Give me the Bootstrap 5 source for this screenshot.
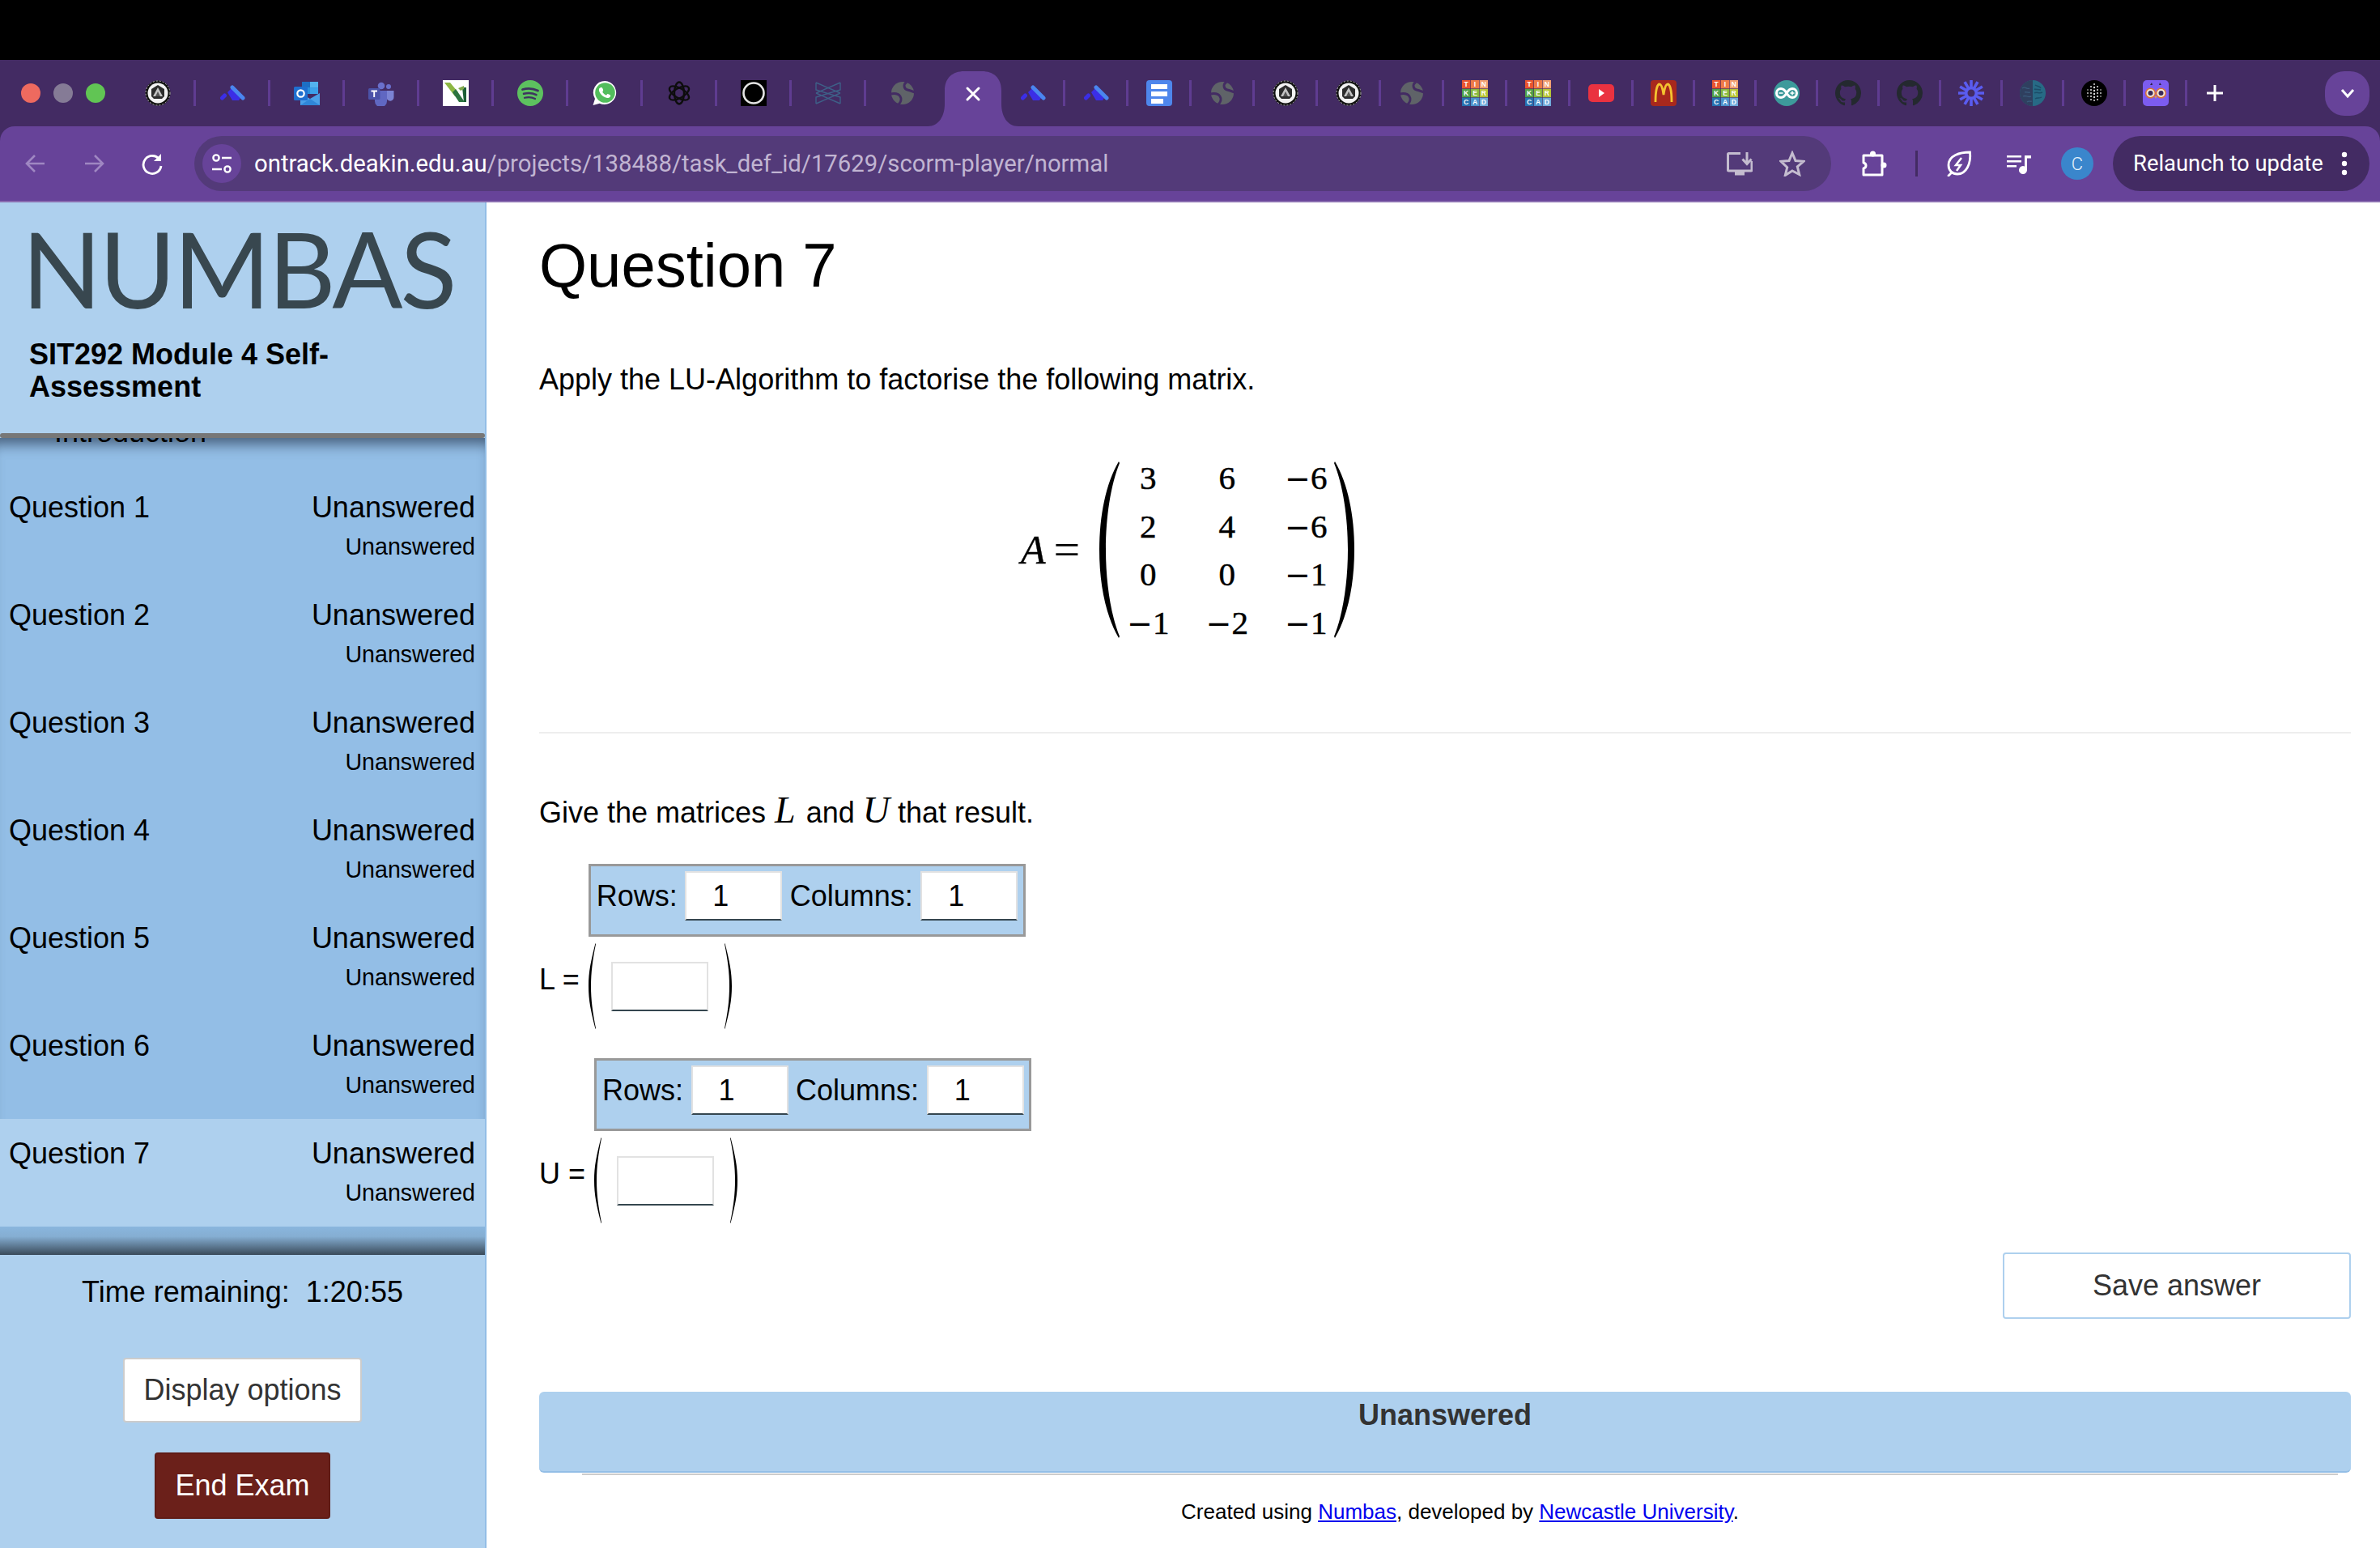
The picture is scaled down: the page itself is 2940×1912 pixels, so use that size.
<!DOCTYPE html>
<html lang="en">
<head>
    <meta charset="UTF-8">
    <title>Numbas - SIT292 Module 4 Self-Assessment</title>
    <link href="https://cdn.jsdelivr.net/npm/bootstrap@5.3.0/dist/css/bootstrap.min.css" rel="stylesheet">
    <style>
        html, body { width: 2940px; height: 1912px; overflow: hidden; }
        body { font-family: "Liberation Sans", Arial, sans-serif; font-size: 36px; color: #000; background: #000; }

        /* browser chrome */
        .blackbar { height: 74px; background: #000; }
        .tabstrip { height: 82px; background: #432b63; }
        .lights { width: 150px; padding-left: 26px; gap: 16px; flex: none; }
        .lights span { width: 24px; height: 24px; border-radius: 50%; }
        .tabcell { height: 32px; border-right: 3px solid #5f3c91; flex: none; }
        .tabcell.wide { width: 92px; }
        .tabcell.slim { width: 78px; }
        .tabcell.slimmer { width: 76px; }
        .tabcell.nosep { border-right-color: transparent; }
        .fav { width: 32px; height: 32px; display: block; }
        .acttab { width: 112px; height: 68px; flex: none; margin: 0 -20px 0 -16px; }
        .tabplus { width: 24px; height: 24px; margin-left: 22px; flex: none; }
        .tabmenu { width: 55px; height: 55px; border-radius: 24px; background: #674399; margin-right: 13px; flex: none; }
        .toolbar { height: 94px; background: #674399; border-top-left-radius: 18px; border-top-right-radius: 18px; border-bottom: 2px solid #8a6db0; padding-left: 8px; padding-right: 13px; }
        .toolwrap { background: #432b63; }
        .slot { width: 72px; flex: none; }
        .slot.afteromni { margin-left: 17px; }
        .slot.nudge { margin-left: 1px; }
        .omni { height: 68px; background: #533a79; border-radius: 34px; margin-left: 16px; padding: 0 32px 0 10px; font-family: Roboto, sans-serif; font-size: 29.3px; min-width: 0; }
        .sitechip { width: 48px; height: 48px; border-radius: 50%; background: #674399; margin-right: 16px; flex: none; }
        .urltext { padding-top: 2px; }
        .urlhost { color: #fff; }
        .urlpath { color: #c1b5d2; }
        .starmark { margin-left: 33px; flex: none; }
        .toolsep { width: 3px; height: 32px; background: #432b63; margin: 0 16px 0 15px; flex: none; }
        .avatar { width: 40px; height: 40px; border-radius: 50%; background: #3a86cc; color: #e6f2fc; font-family: Roboto, sans-serif; font-size: 22px; font-weight: 300; }
        .relaunch { width: 317px; height: 68px; border-radius: 34px; background: #432b63; color: #fff; font-family: Roboto, sans-serif; font-size: 27.4px; margin-left: 8px; padding: 0 27px 0 25px; flex: none; }

        /* exam page */
        .examwrap { height: 1662px; background: #fff; }
        .sidebar { width: 601px; flex: none; background: #aed0ee; border-right: 2px solid #93bee6; }
        .sidehead { height: 285px; padding: 16px 0 0 36px; }
        .logoword { font-family: Lato, sans-serif; font-size: 129px; line-height: 130px; color: #38474f; letter-spacing: -3px; margin-left: -9px; }
        .examname { font-weight: 700; font-size: 36px; line-height: 40px; margin-top: 22px; width: 420px; }
        .sidebreak { height: 6px; background: #777; border-radius: 3px; flex: none; }
        .qlist { height: 1009px; background: #93bee6; overflow: hidden; flex: none; box-shadow: inset 0 20px 16px -12px rgba(50, 70, 95, .75), inset -8px 0 12px -8px rgba(60, 90, 130, .15); }
        .introrow { height: 43px; overflow: hidden; padding-left: 67px; }
        .introrow div { line-height: 42px; margin-top: -28px; }
        .qrow { height: 133px; padding: 19px 12px 0 11px; }
        .qrow.now { background: #aed0ee; }
        .qtop { line-height: 48px; }
        .qsub { font-size: 28.6px; line-height: 40px; margin-top: 4px; text-align: right; }
        .listfoot { height: 35px; background: linear-gradient(#8ab6de, #85aed2 35%, #3a4a5a); }
        .sidefoot { padding-top: 26px; }
        .timeleft { line-height: 40px; }
        .btn.sidebtn { font-size: 36px; line-height: 1; border-radius: 4px; padding: 0; display: flex; align-items: center; justify-content: center; }
        .btn.btn-display { width: 295px; height: 80px; background: #fff; border: 2px solid #ccc; color: #333; margin-top: 61px; }
        .btn.btn-end { width: 217px; height: 82px; background: #6b201a; border: 2px solid #5f1c17; color: #fff; margin-top: 37px; }

        .mainpane { padding: 0 36px 0 65px; min-width: 0; }
        .qtitle { font-size: 76px; font-weight: 400; line-height: 84px; margin: 36px 0 0; }
        .qtext { line-height: 48px; margin: 75px 0 0; }
        .mathblock { margin: 66px 0 0 595px; }
        .mvar { font-family: "Liberation Serif", serif; font-style: italic; font-size: 46px; line-height: 1; }
        .mvar.leadl { margin: 0 3px 0 1px; }
        .mvar.biga { font-size: 50px; -webkit-text-stroke: .4px #000; }
        .mateq { font-family: "Liberation Serif", serif; font-size: 58px; line-height: 1; margin: 0 24px 0 10px; }
        .bigparen { width: 25px; height: 220px; flex: none; }
        .flipx { transform: scaleX(-1); }
        .matgrid { display: grid; grid-template-columns: 70px 125px 70px; grid-auto-rows: 59.5px; align-items: center; text-align: center; font-family: "Liberation Serif", serif; font-size: 41px; line-height: 1; -webkit-text-stroke: .5px #000; padding-top: 2px; }
        .mminus { font-family: "DejaVu Sans", sans-serif; font-size: 38px; -webkit-text-stroke: 0; }
        .rulegrey { height: 2px; background: #eee; margin: 105px 0 0; }
        .givetext { line-height: 48px; margin: 72px 0 0; }
        .answergrid { display: grid; grid-template-columns: auto auto; justify-content: start; margin-top: 39px; }
        .answergrid.nextgrid { margin-top: 36px; }
        .mlabel { padding-right: 11px; align-self: center; margin-bottom: 8px; white-space: nowrap; }
        .dimbox { width: 540px; height: 90px; background: #aed0ee; border: 3px solid #999; padding: 6px 6px 0 7px; gap: 9.5px; }
        .dimbox span { line-height: 61px; }
        .form-control.dimcell { width: 120px; height: 61px; flex: none; border: 2px solid #e2e2e2; border-bottom-color: #35464f; border-radius: 0; font-size: 36px; color: #000; padding: 0 0 0 32px; background: #fff; }
        .form-control.entrycell { padding: 0; margin: 0 20px 0 19px; }
        .smallparen { width: 9px; height: 106px; flex: none; }
        .matrixline { height: 106px; margin-top: 8px; }
        .savewrap { margin-top: 36px; }
        .btn.savebtn { width: 430px; height: 82px; background: #fff; border: 2px solid #aed0ee; border-radius: 4px; color: #333; font-size: 36px; }
        .statusbanner { height: 100px; background: #aed0ee; border-bottom: 2px solid #93bee6; border-radius: 6px; margin-top: 90px; padding-top: 5px; color: #333; font-weight: 700; font-size: 36px; line-height: 48px; text-align: center; }
        .creditline { margin: 1px 16px 0 53px; border-top: 2px solid #ccc; padding-top: 27px; font-size: 26px; line-height: 36px; text-align: center; }
        .creditline a { color: #00e; }
    </style>
</head>
<body>
    <!-- icon sheet -->
    <svg width="0" height="0" class="d-block" aria-hidden="true">
        <defs>
            <symbol id="i-crest" viewBox="0 0 32 32"><circle cx="16" cy="16" r="15.500" fill="#111"/><circle cx="16" cy="16" r="15" fill="none" stroke="#bbb" stroke-width="1" stroke-dasharray="2 2"/><circle cx="16" cy="16" r="12.500" fill="#f2f2f2"/><path d="M16 6l8 5v9l-3 3H11l-3-3v-9z" fill="#2c2c2c"/><path d="M16 9l6 11H10z" fill="#c4c4c4"/><path d="M16 14l3 6h-6z" fill="#555"/></symbol>
            <symbol id="i-atl" viewBox="0 0 32 32"><path d="M10 15l5-5 11 12-2 3h-8z" fill="#3b2ee6"/><path d="M16 9l13 13" stroke="#4a86f0" stroke-width="5" stroke-linecap="round" fill="none"/><path d="M3.500 22l3-3" stroke="#3b2ee6" stroke-width="5" stroke-linecap="round" fill="none"/></symbol>
            <symbol id="i-outlook" viewBox="0 0 32 32"><rect x="10" y="2" width="20" height="15" fill="#1d6fc4"/><rect x="20" y="2" width="10" height="7.500" fill="#53b2ee"/><rect x="10" y="9" width="10" height="8" fill="#2a8fdc"/><rect x="20" y="9.500" width="10" height="7.500" fill="#3ba1ea"/><path d="M8 16l12 7 12-7v15H8z" fill="#4ba0e8"/><path d="M8 31l12-8 12 8z" fill="#2f86d8"/><rect y="8" width="17" height="17" rx="1.500" fill="#1f6fd0"/><circle cx="8.500" cy="16.500" r="4.200" fill="none" stroke="#fff" stroke-width="2.200"/></symbol>
            <symbol id="i-teams" viewBox="0 0 32 32"><circle cx="16" cy="7" r="4.300" fill="#6a70cc"/><circle cx="25" cy="8" r="3" fill="#6a70cc"/><path d="M22 13h9.500v8a4.500 4.500 0 0 1-9 .5z" fill="#7b83d4"/><path d="M8 13h15v13a7.500 7.500 0 0 1-15 0z" fill="#6067c2"/><rect y="10" width="14.500" height="14" rx="1.500" fill="#4b53a8"/><path d="M3.500 13.500h7.500M7.200 13.500v7.500" stroke="#fff" stroke-width="1.900"/></symbol>
            <symbol id="i-v" viewBox="0 0 32 32"><rect width="32" height="32" fill="#fff"/><path d="M2 3h7l10 12-4 5z" fill="#8db743"/><path d="M12 15l4-4 11 16h-7z" fill="#2c7340"/><path d="M24 9h5v18h-3z" fill="#1d5f36"/><path d="M19 10l7-3v4l-4 2z" fill="#7fa84a"/></symbol>
            <symbol id="i-spotify" viewBox="0 0 32 32"><circle cx="16" cy="16" r="16" fill="#5dc15f"/><g fill="none" stroke="#3f3360" stroke-linecap="round"><path d="M6.500 11.500c6-1.800 13.500-1.200 19 1.500" stroke-width="2.800"/><path d="M8 16.800c5-1.400 11-1 15.500 1.400" stroke-width="2.500"/><path d="M9 21.800c4.500-1 9-.8 13 1.200" stroke-width="2.200"/></g></symbol>
            <symbol id="i-whatsapp" viewBox="0 0 32 32"><path d="M16.500 1A14.500 14.500 0 0 0 4 23L1.500 31l8.200-2.300A14.500 14.500 0 1 0 16.500 1z" fill="#fff"/><circle cx="16.500" cy="15.500" r="12.300" fill="#52bd5c"/><path d="M11.500 9c1 0 1.500 0 2 1.500.6 1.700 1 2.200.2 3.200-.6.800-.5 1 .5 2.300 1 1.200 2.100 2 3.200 2.500.8.300 1-.5 1.800-1.300.5-.5 3.700 1 3.900 1.500.3 1-.7 3-2.800 3.300-2 .3-5.500-1-8-3.500-2.500-2.600-3.800-5.300-3.300-7.500.3-1 1.500-2 2.500-2z" fill="#fff"/></symbol>
            <symbol id="i-gpt" viewBox="0 0 32 32"><g fill="none" stroke="#0d0d0d" stroke-width="2.300"><ellipse cx="16" cy="16" rx="6" ry="13.500"/><ellipse cx="16" cy="16" rx="6" ry="13.500" transform="rotate(60 16 16)"/><ellipse cx="16" cy="16" rx="6" ry="13.500" transform="rotate(120 16 16)"/></g></symbol>
            <symbol id="i-ring" viewBox="0 0 32 32"><rect width="32" height="32" fill="#000"/><circle cx="16" cy="16" r="12.500" fill="none" stroke="#e4e4e4" stroke-width="2.600"/></symbol>
            <symbol id="i-lattice" viewBox="0 0 32 32"><path d="M1 3l30 13M31 3L1 16M1 16l30 13M31 16L1 29M1 3v9l30 9v8M31 3v9L1 21v8" fill="none" stroke="#3e6088" stroke-width="1.400"/></symbol>
            <symbol id="i-globe" viewBox="0 0 32 32"><circle cx="16" cy="16" r="14" fill="#5f6368"/><path d="M21 2c-5 4-3 9 1 10 4 1 6 2 9 3M1 17c5-1 10 0 12 3 2 3 1 7-2 10" fill="none" stroke="#432b63" stroke-width="3"/></symbol>
            <symbol id="i-docs" viewBox="0 0 32 32"><rect width="32" height="32" rx="4" fill="#4e86ec"/><path d="M6 5h20v6H6zM6 14h20v6H6zM6 23h15v6H6z" fill="#fff"/></symbol>
            <symbol id="i-tinker" viewBox="0 0 32 32"><rect width="10.300" height="10.300" fill="#e9552f"/><rect x="10.900" width="10.300" height="10.300" fill="#ee7a48"/><rect x="21.700" width="10.300" height="10.300" fill="#f3a072"/><rect y="10.900" width="10.300" height="10.300" fill="#4f9f4a"/><rect x="10.900" y="10.900" width="10.300" height="10.300" fill="#86b83c"/><rect x="21.700" y="10.900" width="10.300" height="10.300" fill="#b6c536"/><rect y="21.700" width="10.300" height="10.300" fill="#2670b0"/><rect x="10.900" y="21.700" width="10.300" height="10.300" fill="#4b92cc"/><rect x="21.700" y="21.700" width="10.300" height="10.300" fill="#6fa9da"/><g fill="#fff" font-family="Liberation Sans, sans-serif" font-size="8.500" font-weight="700" text-anchor="middle"><text x="5.100" y="8.300">T</text><text x="16" y="8.300">I</text><text x="26.900" y="8.300">N</text><text x="5.100" y="19.200">K</text><text x="16" y="19.200">E</text><text x="26.900" y="19.200">R</text><text x="5.100" y="30">C</text><text x="16" y="30">A</text><text x="26.900" y="30">D</text></g></symbol>
            <symbol id="i-yt" viewBox="0 0 32 32"><rect y="5" width="32" height="22" rx="5" fill="#ea3240"/><path d="M13 11l7 5-7 5z" fill="#fff"/></symbol>
            <symbol id="i-mcd" viewBox="0 0 32 32"><rect width="32" height="32" rx="4" fill="#a8281d"/><path d="M6 27C6 13 8 5 11 5c2.500 0 4 6 5 13 1-7 2.500-13 5-13 3 0 5 8 5 22" fill="none" stroke="#f4c430" stroke-width="2.800"/></symbol>
            <symbol id="i-arduino" viewBox="0 0 32 32"><circle cx="16" cy="16" r="16" fill="#3d9a9b"/><g fill="none" stroke="#fff" stroke-width="3"><path d="M16 16c-2-3.500-4-5.500-7-5.500a5.500 5.500 0 0 0 0 11c3 0 5-2 7-5.500s4-5.500 7-5.500a5.500 5.500 0 0 1 0 11c-3 0-5-2-7-5.500z"/></g><path d="M6.500 16h5M20.500 16h5M23 13.500v5" stroke="#fff" stroke-width="1.500"/></symbol>
            <symbol id="i-github" viewBox="0 0 16 16"><path fill="#24292f" d="M8 0C3.580 0 0 3.580 0 8c0 3.540 2.290 6.530 5.470 7.590.4.070.55-.17.55-.38 0-.19-.01-.82-.01-1.490-2.010.37-2.530-.49-2.690-.94-.09-.23-.48-.94-.82-1.130-.28-.15-.68-.52-.01-.53.63-.01 1.080.58 1.230.82.72 1.210 1.870.87 2.330.66.070-.52.28-.87.51-1.070-1.780-.2-3.640-.89-3.640-3.950 0-.87.31-1.590.82-2.150-.08-.2-.36-1.020.08-2.120 0 0 .67-.21 2.200.82.64-.18 1.320-.27 2-.27.68 0 1.360.09 2 .27 1.530-1.040 2.200-.82 2.200-.82.44 1.100.16 1.920.08 2.120.51.56.82 1.270.82 2.150 0 3.070-1.870 3.750-3.650 3.950.29.25.54.73.54 1.480 0 1.070-.01 1.930-.01 2.200 0 .21.15.46.55.38A8.012 8.012 0 0 0 16 8c0-4.420-3.580-8-8-8z"/></symbol>
            <symbol id="i-burst" viewBox="0 0 32 32"><g stroke="#5a5cf0" stroke-width="3.600"><path d="M16 0v32M0 16h32"/><path d="M16 0v32M0 16h32" transform="rotate(30 16 16)"/><path d="M16 0v32M0 16h32" transform="rotate(60 16 16)"/></g><circle cx="16" cy="16" r="8" fill="#5a5cf0"/><circle cx="16" cy="16" r="4.500" fill="#432b63"/></symbol>
            <symbol id="i-brain" viewBox="0 0 32 32"><circle cx="16" cy="16" r="16" fill="#276a85"/><path d="M16 0a16 16 0 0 0 0 32z" fill="#2f3f5f"/><path d="M3 10c4-3 6 2 9 0M4 20c4-2 6 2 10 0M9 27c2-2 4 0 6-1M6 15c2-1 4 1 7 0" stroke="#3a5a7c" fill="none" stroke-width="1.300"/><path d="M19 6c3 2 6 1 7 4M18 16c3-2 6 1 10-1M19 23c3-2 5 0 8-2M18 11c2 1 5 0 8 1" stroke="#1b4d68" fill="none" stroke-width="1.500"/></symbol>
            <symbol id="i-dots" viewBox="0 0 32 32"><circle cx="16" cy="16" r="16" fill="#000"/><g fill="#ddd"><circle cx="16" cy="5" r="1"/><circle cx="16" cy="9" r="1.200"/><circle cx="16" cy="13" r="1.200"/><circle cx="16" cy="17" r="1.200"/><circle cx="16" cy="21" r="1.200"/><circle cx="16" cy="25" r="1"/><circle cx="12" cy="8" r="1"/><circle cx="12" cy="12" r="1.100"/><circle cx="12" cy="16" r="1.100"/><circle cx="12" cy="20" r="1.100"/><circle cx="12" cy="24" r="1"/><circle cx="20" cy="8" r="1"/><circle cx="20" cy="12" r="1.100"/><circle cx="20" cy="16" r="1.100"/><circle cx="20" cy="20" r="1.100"/><circle cx="20" cy="24" r="1"/><circle cx="8" cy="12" r=".8"/><circle cx="8" cy="16" r=".9"/><circle cx="8" cy="20" r=".8"/><circle cx="24" cy="12" r=".8"/><circle cx="24" cy="16" r=".9"/><circle cx="24" cy="20" r=".8"/></g></symbol>
            <symbol id="i-owl" viewBox="0 0 32 32"><rect width="32" height="32" rx="5" fill="#7c5cf0"/><path d="M9 6l2-3 1 3zM23 6l-2-3-1 3z" fill="#2a2140"/><circle cx="9.500" cy="16" r="5.800" fill="#f3e6d4" stroke="#d9703a" stroke-width="1.500"/><circle cx="22.500" cy="16" r="5.800" fill="#f3e6d4" stroke="#d9703a" stroke-width="1.500"/><circle cx="9.500" cy="16" r="3" fill="#3a2a5a"/><circle cx="22.500" cy="16" r="3" fill="#3a2a5a"/><path d="M14.500 20h3l-1.500 3z" fill="#e9a23a"/></symbol>
            <symbol id="i-bigparen" viewBox="0 0 25 220"><path d="M24 1C8 28 0 68 0 110c0 42 8 82 24 109l1-2C14 190 8 150 8 110 8 70 14 30 25 3z" fill="#000"/></symbol>
            <symbol id="i-smallparen" viewBox="0 0 9 106"><path d="M8.500 0C3 22 0 35 0 53c0 18 3 31 8.500 53l.5-1C5 85 3 70 3 53 3 36 5 21 9 1z" fill="#000"/></symbol>
        </defs>
    </svg>

    <div class="blackbar"></div>

    <!-- tab strip -->
    <div class="tabstrip d-flex align-items-center">
        <div class="lights d-flex align-items-center">
            <span style="background:#ee6a5f"></span><span style="background:#857b96"></span><span style="background:#61c554"></span>
        </div>
        <div class="tabcell wide d-flex justify-content-center"><svg class="fav"><use href="#i-crest"/></svg></div>
        <div class="tabcell wide d-flex justify-content-center"><svg class="fav"><use href="#i-atl"/></svg></div>
        <div class="tabcell wide d-flex justify-content-center"><svg class="fav"><use href="#i-outlook"/></svg></div>
        <div class="tabcell wide d-flex justify-content-center"><svg class="fav"><use href="#i-teams"/></svg></div>
        <div class="tabcell wide d-flex justify-content-center"><svg class="fav"><use href="#i-v"/></svg></div>
        <div class="tabcell wide d-flex justify-content-center"><svg class="fav"><use href="#i-spotify"/></svg></div>
        <div class="tabcell wide d-flex justify-content-center"><svg class="fav"><use href="#i-whatsapp"/></svg></div>
        <div class="tabcell wide d-flex justify-content-center"><svg class="fav"><use href="#i-gpt"/></svg></div>
        <div class="tabcell wide d-flex justify-content-center"><svg class="fav"><use href="#i-ring"/></svg></div>
        <div class="tabcell wide d-flex justify-content-center"><svg class="fav"><use href="#i-lattice"/></svg></div>
        <div class="tabcell wide nosep d-flex justify-content-center"><svg class="fav"><use href="#i-globe"/></svg></div>
        <svg class="acttab align-self-end" viewBox="0 0 112 68"><path d="M0 68c14 0 21-13 21-28V24C21 8 31 0 45 0h22c14 0 24 8 24 24v16c0 15 7 28 21 28z" fill="#674399"/><path d="M49 21l14 14M63 21L49 35" stroke="#fff" stroke-width="3" stroke-linecap="round"/></svg>
        <div class="tabcell slim d-flex justify-content-center"><svg class="fav"><use href="#i-atl"/></svg></div>
        <div class="tabcell slim d-flex justify-content-center"><svg class="fav"><use href="#i-atl"/></svg></div>
        <div class="tabcell slim d-flex justify-content-center"><svg class="fav"><use href="#i-docs"/></svg></div>
        <div class="tabcell slim d-flex justify-content-center"><svg class="fav"><use href="#i-globe"/></svg></div>
        <div class="tabcell slim d-flex justify-content-center"><svg class="fav"><use href="#i-crest"/></svg></div>
        <div class="tabcell slim d-flex justify-content-center"><svg class="fav"><use href="#i-crest"/></svg></div>
        <div class="tabcell slim d-flex justify-content-center"><svg class="fav"><use href="#i-globe"/></svg></div>
        <div class="tabcell slim d-flex justify-content-center"><svg class="fav"><use href="#i-tinker"/></svg></div>
        <div class="tabcell slim d-flex justify-content-center"><svg class="fav"><use href="#i-tinker"/></svg></div>
        <div class="tabcell slim d-flex justify-content-center"><svg class="fav"><use href="#i-yt"/></svg></div>
        <div class="tabcell slimmer d-flex justify-content-center"><svg class="fav"><use href="#i-mcd"/></svg></div>
        <div class="tabcell slimmer d-flex justify-content-center"><svg class="fav"><use href="#i-tinker"/></svg></div>
        <div class="tabcell slimmer d-flex justify-content-center"><svg class="fav"><use href="#i-arduino"/></svg></div>
        <div class="tabcell slimmer d-flex justify-content-center"><svg class="fav"><use href="#i-github"/></svg></div>
        <div class="tabcell slimmer d-flex justify-content-center"><svg class="fav"><use href="#i-github"/></svg></div>
        <div class="tabcell slimmer d-flex justify-content-center"><svg class="fav"><use href="#i-burst"/></svg></div>
        <div class="tabcell slimmer d-flex justify-content-center"><svg class="fav"><use href="#i-brain"/></svg></div>
        <div class="tabcell slimmer d-flex justify-content-center"><svg class="fav"><use href="#i-dots"/></svg></div>
        <div class="tabcell slimmer d-flex justify-content-center"><svg class="fav"><use href="#i-owl"/></svg></div>
        <svg class="tabplus" viewBox="0 0 24 24"><path d="M12 2v20M2 12h20" stroke="#fff" stroke-width="3"/></svg>
        <div class="tabmenu ms-auto d-flex align-items-center justify-content-center">
            <svg width="20" height="14" viewBox="0 0 20 14"><path d="M3 3l7 8 7-8" fill="none" stroke="#fff" stroke-width="3"/></svg>
        </div>
    </div>

    <!-- address bar -->
    <div class="toolwrap">
    <div class="toolbar d-flex align-items-center">
        <div class="slot d-flex justify-content-center"><svg width="28" height="28" viewBox="0 0 28 28"><path d="M25 14H4M13 4L3 14l10 10" fill="none" stroke="#9f87c2" stroke-width="2.600"/></svg></div>
        <div class="slot d-flex justify-content-center"><svg width="28" height="28" viewBox="0 0 28 28"><path d="M3 14h21M15 4l10 10-10 10" fill="none" stroke="#9f87c2" stroke-width="2.600"/></svg></div>
        <div class="slot d-flex justify-content-center"><svg width="28" height="28" viewBox="0 0 28 28"><path d="M23 9a11 11 0 1 0 2 8" fill="none" stroke="#fff" stroke-width="2.800"/><path d="M25 2v9h-9z" fill="#fff"/></svg></div>
        <div class="omni flex-grow-1 d-flex align-items-center">
            <div class="sitechip d-flex align-items-center justify-content-center">
                <svg width="28" height="28" viewBox="0 0 28 28" fill="none" stroke="#fff" stroke-width="2.400"><circle cx="7" cy="7" r="3.600"/><path d="M14 7h12M2 21h12"/><circle cx="21" cy="21" r="3.600"/></svg>
            </div>
            <span class="urltext text-nowrap"><span class="urlhost">ontrack.deakin.edu.au</span><span class="urlpath">/projects/138488/task_def_id/17629/scorm-player/normal</span></span>
            <svg class="ms-auto flex-none" width="32" height="30" viewBox="0 0 32 30" fill="none" stroke="#c4bccf" stroke-width="3"><path d="M17 2.500H2.500a1 1 0 0 0-1 1V23a1 1 0 0 0 1 1H30a1 1 0 0 0 1-1V12"/><path d="M25 1v14M19.500 9.500l5.500 6 5.500-6"/><path d="M10 27h12" stroke-width="5"/></svg>
            <svg class="starmark" width="32" height="32" viewBox="0 0 32 32"><path d="M16 3l4 9.500 10 .800-7.700 6.500 2.400 9.700L16 25l-8.700 5.500 2.400-9.700L2 13.300l10-.800z" fill="none" stroke="#c4bccf" stroke-width="3"/></svg>
        </div>
        <div class="slot afteromni d-flex justify-content-center"><svg width="32" height="32" viewBox="0 0 32 32"><path d="M3 6h23v24H3v-8c4-1 4-6 0-7z" fill="none" stroke="#fff" stroke-width="3" stroke-linejoin="round"/><circle cx="14.500" cy="4" r="3.500" fill="#fff"/><circle cx="28" cy="18" r="3.500" fill="#fff"/></svg></div>
        <div class="toolsep"></div>
        <div class="slot d-flex justify-content-center"><svg width="32" height="32" viewBox="0 0 32 32" fill="none" stroke="#fff" stroke-width="2.800"><path d="M28.500 2C16 2 2 6 2 18c0 7 5 11 11 11 11 0 17-13 15.500-27z"/><path d="M18 9l-7 9h6l-5 7" stroke-width="2.500"/><path d="M2 31l4-4" stroke-linecap="round"/></svg></div>
        <div class="slot nudge d-flex justify-content-center"><svg width="30" height="26" viewBox="0 0 30 26" fill="#fff"><path d="M0 3h18v2.500H0zM0 9h18v2.500H0zM0 15h12v2.500H0zM22 3h8v3.500h-5V21a5 5 0 1 1-3-4.500z"/></svg></div>
        <div class="slot d-flex justify-content-center"><div class="avatar d-flex align-items-center justify-content-center">C</div></div>
        <div class="relaunch d-flex align-items-center justify-content-between">
            <span class="urltext text-nowrap">Relaunch to update</span>
            <svg width="8" height="30" viewBox="0 0 8 30" fill="#fff"><circle cx="4" cy="4" r="3.200"/><circle cx="4" cy="15" r="3.200"/><circle cx="4" cy="26" r="3.200"/></svg>
        </div>
    </div>
    </div>

    <div class="examwrap d-flex">
        <!-- left column -->
        <aside class="sidebar d-flex flex-column">
            <div class="sidehead">
                <div class="logoword">NUMBAS</div>
                <div class="examname">SIT292 Module 4 Self-Assessment</div>
            </div>
            <div class="sidebreak"></div>
            <div class="qlist">
                <div class="introrow"><div>Introduction</div></div>
                <div class="qrow"><div class="qtop d-flex justify-content-between"><span>Question 1</span><span>Unanswered</span></div><div class="qsub">Unanswered</div></div>
                <div class="qrow"><div class="qtop d-flex justify-content-between"><span>Question 2</span><span>Unanswered</span></div><div class="qsub">Unanswered</div></div>
                <div class="qrow"><div class="qtop d-flex justify-content-between"><span>Question 3</span><span>Unanswered</span></div><div class="qsub">Unanswered</div></div>
                <div class="qrow"><div class="qtop d-flex justify-content-between"><span>Question 4</span><span>Unanswered</span></div><div class="qsub">Unanswered</div></div>
                <div class="qrow"><div class="qtop d-flex justify-content-between"><span>Question 5</span><span>Unanswered</span></div><div class="qsub">Unanswered</div></div>
                <div class="qrow"><div class="qtop d-flex justify-content-between"><span>Question 6</span><span>Unanswered</span></div><div class="qsub">Unanswered</div></div>
                <div class="qrow now"><div class="qtop d-flex justify-content-between"><span>Question 7</span><span>Unanswered</span></div><div class="qsub">Unanswered</div></div>
                <div class="listfoot"></div>
            </div>
            <div class="sidefoot d-flex flex-column align-items-center">
                <div class="timeleft">Time remaining:&nbsp; 1:20:55</div>
                <button type="button" class="btn sidebtn btn-display">Display options</button>
                <button type="button" class="btn sidebtn btn-end">End Exam</button>
            </div>
        </aside>

        <!-- question -->
        <main class="mainpane flex-grow-1">
            <h1 class="qtitle">Question 7</h1>
            <p class="qtext">Apply the LU-Algorithm to factorise the following matrix.</p>
            <div class="mathblock d-flex align-items-center">
                <span class="mvar biga">A</span><span class="mateq">=</span>
                <svg class="bigparen"><use href="#i-bigparen"/></svg>
                <div class="matgrid">
                    <span>3</span><span>6</span><span><span class="mminus">−</span>6</span>
                    <span>2</span><span>4</span><span><span class="mminus">−</span>6</span>
                    <span>0</span><span>0</span><span><span class="mminus">−</span>1</span>
                    <span><span class="mminus">−</span>1</span><span><span class="mminus">−</span>2</span><span><span class="mminus">−</span>1</span>
                </div>
                <svg class="bigparen flipx"><use href="#i-bigparen"/></svg>
            </div>
            <div class="rulegrey"></div>
            <p class="givetext">Give the matrices <span class="mvar leadl">L</span> and <span class="mvar">U</span> that result.</p>
            <div class="answergrid">
                <div></div>
                <div class="dimbox d-flex"><span>Rows:</span><input class="form-control dimcell" type="text" value="1"><span>Columns:</span><input class="form-control dimcell" type="text" value="1"></div>
                <div class="mlabel">L =</div>
                <div class="matrixline d-flex align-items-center">
                    <svg class="smallparen"><use href="#i-smallparen"/></svg>
                    <input class="form-control dimcell entrycell" type="text">
                    <svg class="smallparen flipx"><use href="#i-smallparen"/></svg>
                </div>
            </div>
            <div class="answergrid nextgrid">
                <div></div>
                <div class="dimbox d-flex"><span>Rows:</span><input class="form-control dimcell" type="text" value="1"><span>Columns:</span><input class="form-control dimcell" type="text" value="1"></div>
                <div class="mlabel">U =</div>
                <div class="matrixline d-flex align-items-center">
                    <svg class="smallparen"><use href="#i-smallparen"/></svg>
                    <input class="form-control dimcell entrycell" type="text">
                    <svg class="smallparen flipx"><use href="#i-smallparen"/></svg>
                </div>
            </div>
            <div class="savewrap d-flex justify-content-end">
                <button type="button" class="btn savebtn">Save answer</button>
            </div>
            <div class="statusbanner">Unanswered</div>
            <div class="creditline">Created using <a href="#">Numbas</a>, developed by <a href="#">Newcastle University</a>.</div>
        </main>
    </div>

    <script src="https://cdn.jsdelivr.net/npm/bootstrap@5.3.0/dist/js/bootstrap.bundle.min.js"></script>
</body>
</html>
